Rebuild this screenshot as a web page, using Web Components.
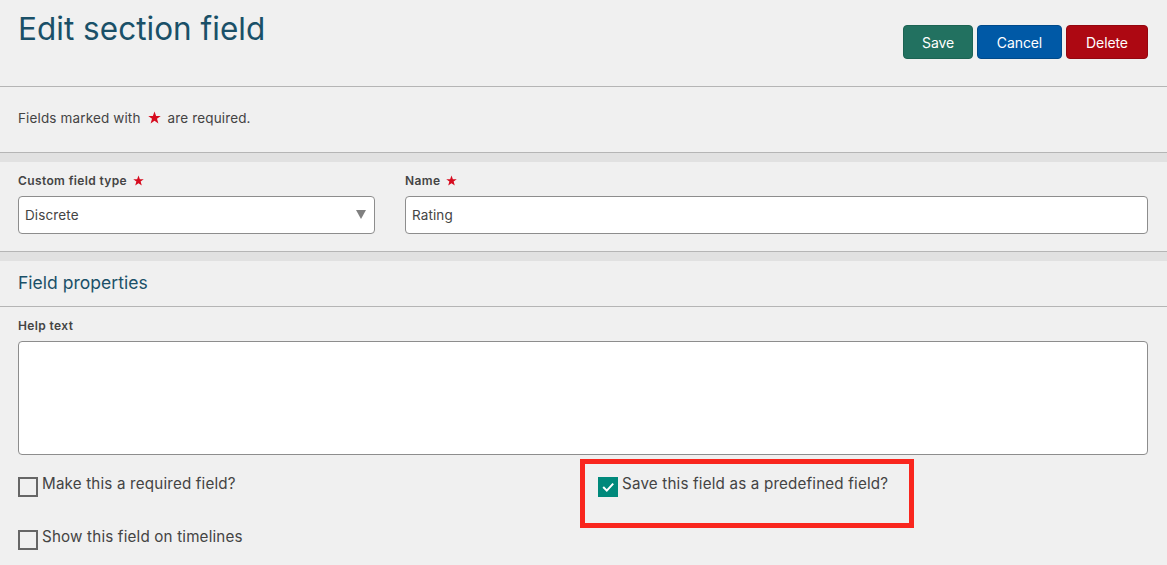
<!DOCTYPE html>
<html><head><meta charset="utf-8">
<style>
html,body{margin:0;padding:0;background:#f0f0f0;height:565px;overflow:hidden}
body{font-family:"Inter","Noto Sans",sans-serif;color:#444;font-size:13px}
</style></head><body>
<template id="t-btn"><style>
:host{display:block;box-sizing:border-box;height:34px;border-radius:4px;border:1px solid var(--b);background:var(--c);color:#fff;font-size:14px;line-height:34px;text-align:center;letter-spacing:-.1px}
</style><slot></slot></template>
<template id="t-star"><style>:host{display:inline-block;width:13px;height:13px;line-height:0}svg{width:100%;height:100%;display:block}</style>
<svg viewBox="0 0 24 24"><polygon fill="#d60b1e" points="12,1 15,9 23.5,9 16.6,14.4 19.2,23 12,17.8 4.8,23 7.4,14.4 .5,9 9,9"/></svg></template>
<template id="t-header"><style>
:host{display:flex;justify-content:space-between;box-sizing:border-box;height:87px;padding:0 19px 0 18px;border-bottom:1px solid #b5b5b5}
h1{margin:10px 0 0;font-size:31.5px;line-height:38px;font-weight:400;color:#1a5068;letter-spacing:.02px}
.b{display:flex;gap:4px;padding-top:25px}
</style><h1><slot name="title"></slot></h1><div class="b"><slot></slot></div></template>
<template id="t-notice"><style>
:host{display:flex;align-items:center;box-sizing:border-box;height:66px;padding:0 18px 4px;border-bottom:1px solid #b5b5b5;font-size:13.5px;letter-spacing:.14px}
::slotted(x-star){margin:0 7px}
</style><slot></slot></template>
<template id="t-band"><style>:host{display:block;height:9px;background:#e1e1e1}</style></template>
<template id="t-row"><style>
:host{display:grid;grid-template-columns:357px 743px;column-gap:30px;box-sizing:border-box;height:90px;padding:9px 19px 0 18px;border-bottom:1px solid #b5b5b5}
</style><slot></slot></template>
<template id="t-label"><style>
:host{display:flex;align-items:center;gap:6px;height:18px;font-size:12px;font-weight:600;color:#444;letter-spacing:.37px}
</style><slot></slot></template>
<template id="t-input"><style>
:host{display:flex;align-items:center;justify-content:space-between;box-sizing:border-box;height:38px;margin-top:7px;padding:0 7px 0 6px;background:#fff;border:1px solid #8d8d8d;border-radius:4px;font-size:13.5px;letter-spacing:.12px}
i{width:0;height:0;border-left:5px solid transparent;border-right:5px solid transparent;border-top:9px solid #808080;margin:-2px 1px 0 0;display:var(--arrow,none)}
</style><span><slot></slot></span><i></i></template>
<template id="t-sec"><style>
:host{display:flex;align-items:center;box-sizing:border-box;height:46px;padding:0 18px 2px;border-bottom:1px solid #b5b5b5;font-size:17.5px;color:#1a5068;letter-spacing:.02px}
</style><slot></slot></template>
<template id="t-help"><style>
:host{display:block;padding:9px 19px 0 18px}
.a{box-sizing:border-box;height:114px;margin-top:7px;background:#fff;border:1px solid #8d8d8d;border-radius:4px}
</style><slot></slot><div class="a"></div></template>
<template id="t-checks"><style>
:host{display:grid;grid-template-columns:580px 1fr;grid-auto-rows:53px;padding:19px 18px 0}
</style><slot></slot></template>
<template id="t-check"><style>
:host{display:flex;align-items:flex-start;gap:4px;font-size:15.2px;line-height:20px;color:#444;letter-spacing:.17px}
.box{box-sizing:border-box;width:20px;height:20px;margin-top:3px;border:2px solid #666;flex:none;display:block}
:host([checked]) .box{border:0;background:#00897b}
svg{display:none;width:20px;height:20px}
:host([checked]) svg{display:block}
</style><span class="box"><svg viewBox="0 0 20 20"><path d="M5.2 10l3.6 3.6 6.4-7" fill="none" stroke="#fff" stroke-width="2"/></svg></span><span class="t"><slot></slot></span></template>
<template id="t-mark"><style>
:host{position:absolute;left:580px;top:459px;width:334px;height:69px;box-sizing:border-box;border:5px solid #f9261e;pointer-events:none}
</style></template>

<x-header>
  <span slot="title">Edit section field</span>
  <x-btn style="--c:#227160;--b:#1c6353;width:70px">Save</x-btn>
  <x-btn style="--c:#0059a6;--b:#004a8a;width:85px">Cancel</x-btn>
  <x-btn style="--c:#ad0812;--b:#94060f;width:82px">Delete</x-btn>
</x-header>
<x-notice>Fields marked with <x-star></x-star> are required.</x-notice>
<x-band></x-band>
<x-row>
  <div><x-label>Custom field type <x-star style="width:11px;height:11px"></x-star></x-label><x-input style="--arrow:block">Discrete</x-input></div>
  <div><x-label>Name <x-star style="width:11px;height:11px"></x-star></x-label><x-input>Rating</x-input></div>
</x-row>
<x-band></x-band>
<x-sec>Field properties</x-sec>
<x-help><x-label>Help text</x-label></x-help>
<x-checks>
  <x-check>Make this a required field?</x-check>
  <x-check checked>Save this field as a predefined field?</x-check>
  <x-check>Show this field on timelines</x-check>
</x-checks>
<x-mark></x-mark>
<script>
for(const [n,id] of [['x-btn','t-btn'],['x-star','t-star'],['x-header','t-header'],['x-notice','t-notice'],['x-band','t-band'],['x-row','t-row'],['x-label','t-label'],['x-input','t-input'],['x-sec','t-sec'],['x-help','t-help'],['x-checks','t-checks'],['x-check','t-check'],['x-mark','t-mark']]){
  customElements.define(n,class extends HTMLElement{constructor(){super();this.attachShadow({mode:'open'}).appendChild(document.getElementById(id).content.cloneNode(true))}});
}
</script>
</body></html>
